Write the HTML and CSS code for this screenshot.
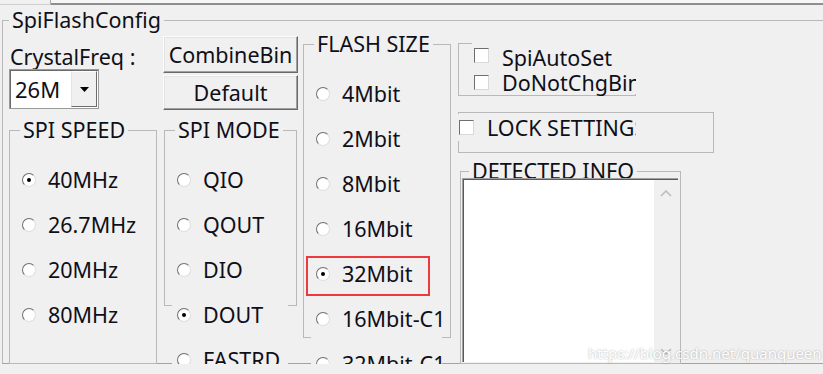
FILE: index.html
```html
<!DOCTYPE html>
<html lang="en">
  <head>
    <meta charset="UTF-8" />
    <title>SpiFlashConfig</title>
    <link rel="stylesheet" href="styles.css">
  </head>
  <body>
    <div class="topbar">
      <div class="tab"></div>
      <div class="tab-rest"></div>
    </div>

    <div class="group main">
      <div class="group-title">SpiFlashConfig</div>
      <div class="cols">
        <div class="col">
          <div class="label">CrystalFreq :</div>
          <div class="combo">
            <span class="combo-value">26M</span>
            <span class="combo-btn">
              <svg width="9" height="5" viewBox="0 0 9 5"><polygon points="0,0 9,0 4.5,5" fill="#000"/></svg>
            </span>
          </div>
          <div class="group speed">
            <div class="group-title">SPI SPEED</div>
            <div class="radio checked"><span class="dot"></span>40MHz</div>
            <div class="radio"><span class="dot"></span>26.7MHz</div>
            <div class="radio"><span class="dot"></span>20MHz</div>
            <div class="radio"><span class="dot"></span>80MHz</div>
          </div>
        </div>

        <div class="col">
          <button class="btn combine">CombineBin</button>
          <button class="btn default">Default</button>
          <div class="group mode">
            <div class="group-title">SPI MODE</div>
            <div class="radio"><span class="dot"></span>QIO</div>
            <div class="radio"><span class="dot"></span>QOUT</div>
            <div class="radio"><span class="dot"></span>DIO</div>
            <div class="radio checked"><span class="dot"></span>DOUT</div>
            <div class="radio"><span class="dot"></span>FASTRD</div>
          </div>
        </div>

        <div class="col">
          <div class="group flash">
            <div class="group-title">FLASH SIZE</div>
            <div class="radio"><span class="dot"></span>4Mbit</div>
            <div class="radio"><span class="dot"></span>2Mbit</div>
            <div class="radio"><span class="dot"></span>8Mbit</div>
            <div class="radio"><span class="dot"></span>16Mbit</div>
            <div class="radio checked"><span class="dot"></span>32Mbit</div>
            <div class="radio"><span class="dot"></span>16Mbit-C1</div>
            <div class="radio"><span class="dot"></span>32Mbit-C1</div>
          </div>
        </div>

        <div class="col">
          <div class="chk-group">
            <div class="check first"><span class="box"></span>SpiAutoSet</div>
            <div class="check second"><span class="box"></span>DoNotChgBin</div>
          </div>
          <div class="lock-group">
            <div class="check lock"><span class="box"></span>LOCK SETTINGS</div>
          </div>
          <div class="group info">
            <div class="group-title">DETECTED INFO</div>
            <div class="info-box">
              <div class="info-text"></div>
              <div class="scrollbar">
                <svg width="12" height="7" viewBox="0 0 12 7"><polyline points="1,6 6,1 11,6" fill="none" stroke="#bdbdbd" stroke-width="1.6"/></svg>
                <svg width="12" height="7" viewBox="0 0 12 7"><polyline points="1,1 6,6 11,1" fill="none" stroke="#bdbdbd" stroke-width="1.6"/></svg>
              </div>
            </div>
          </div>
        </div>
      </div>
    </div>

    <div class="statusbar"></div>

    <div class="highlight"></div>
    <div class="watermark">https://blog.csdn.net/quanqueen</div>
  </body>
</html>
```

FILE: styles.css
```css
* {
  box-sizing: border-box;
}
body {
  margin: 0;
  width: 823px;
  height: 374px;
  overflow: hidden;
  position: relative;
  background: #f0f0f0;
  font-family: "Noto Sans", sans-serif;
  font-size: 21.5px;
  color: #0f0f18;
}
.topbar {
  display: flex;
  height: 5px;
}
.tab {
  width: 51px;
  border-right: 1px solid #a8a8a8;
  border-bottom: 1px solid #cfcfcf;
}
.tab-rest {
  flex: 1;
  background: #f6f6f6;
  border-bottom: 2px solid #8e8e8e;
}

/* group boxes */
.group {
  border: 1px solid #b9b9b9;
}
.group-title {
  display: table;
  margin: -15px 0 13px 10px;
  padding: 0 3px;
  line-height: 28px;
  background: #f0f0f0;
  white-space: nowrap;
}
.main {
  margin: 15px 0 0 2px;
  height: 344px;
  border-right: none;
  border-bottom-color: #a3a3a3;
}
.main > .group-title {
  margin: -15px 0 0 6px;
}
.cols {
  display: grid;
  grid-template-columns: 148px 135px 148px 260px;
  column-gap: 6px;
  align-items: start;
  padding-left: 6px;
}
.col {
  display: flex;
  flex-direction: column;
}

/* crystal */
.label {
  margin-top: 9px;
  padding-left: 1px;
  line-height: 28px;
  white-space: nowrap;
}
.combo {
  position: relative;
  display: flex;
  margin-top: -2px;
  width: 90px;
  height: 40px;
  background: #fff;
  border: 1px solid #9a9a9a;
  box-shadow: inset 1px 1px #6a6a6a;
}
.combo-value {
  flex: 1;
  padding-left: 5px;
  font-size: 22px;
  line-height: 38px;
}
.combo-btn {
  display: flex;
  align-items: center;
  justify-content: center;
  width: 26px;
  margin: 1px 1px 1px 0;
  background: #f0f0f0;
  border: 1px solid;
  border-color: #fff #6d6d6d #6d6d6d #e3e3e3;
}
.speed {
  margin-top: 21px;
  height: 234px;
}

/* buttons */
.btn {
  font: inherit;
  color: inherit;
  width: 135px;
  margin: 2px 0 0;
  padding: 0;
  background: #f0f0f0;
  border: 1px solid;
  border-color: #fcfcfc #696969 #696969 #fcfcfc;
  box-shadow: inset -1px -1px #a0a0a0, inset 1px 1px #e3e3e3;
  line-height: 1;
}
.combine {
  height: 37px;
}
.default {
  height: 35px;
}
.mode {
  margin: 20px 0 0 1px;
  width: 133px;
  height: 176px;
}
.flash {
  margin: 10px 0 0 -1px;
  width: 148px;
  height: 294px;
}

/* radios */
.radio {
  display: flex;
  align-items: center;
  height: 45px;
  margin: 0 8px 0 7px;
  padding-left: 5px;
  background: #f0f0f0;
  white-space: nowrap;
}
.dot {
  flex: none;
  display: flex;
  align-items: center;
  justify-content: center;
  width: 14px;
  height: 14px;
  margin-right: 12px;
  border-radius: 50%;
  background: #fff;
  border: 1px solid;
  border-color: #6f6f6f #dedede #dedede #6f6f6f;
}
.checked .dot::after {
  content: "";
  width: 4px;
  height: 4px;
  border-radius: 50%;
  background: #000;
}

/* checkboxes */
.chk-group {
  margin-top: 9px;
  width: 178px;
  height: 53px;
  border: 1px solid #b9b9b9;
}
.check {
  display: flex;
  align-items: center;
  overflow-x: clip;
  white-space: nowrap;
  background: #f0f0f0;
}
.chk-group .check {
  width: 164px;
  margin-left: 13px;
  padding-left: 2px;
}
.first {
  margin-top: -1px;
  height: 28px;
}
.second {
  height: 23px;
}
.box {
  flex: none;
  width: 15px;
  height: 15px;
  margin-right: 13px;
  background: #fff;
  border: 1px solid;
  border-color: #6f6f6f #d9d9d9 #d9d9d9 #6f6f6f;
}
.first .box {
  margin-top: -3px;
}
.lock-group {
  margin-top: 16px;
  width: 256px;
  height: 41px;
  border: 1px solid #b9b9b9;
}
.lock {
  width: 178px;
  height: 27px;
  margin: 1px 0 0 -1px;
  padding-left: 1px;
}

/* detected info */
.info {
  margin: 18px 0 0 2px;
  width: 221px;
  height: 193px;
}
.info .group-title {
  margin: -15px 0 0 8px;
}
.info-box {
  position: relative;
  display: flex;
  width: 216px;
  height: 184px;
  margin: -7px 0 0 1px;
  background: #fff;
  border-top: 1px solid #a0a0a0;
  border-left: 1px solid #a0a0a0;
  box-shadow: inset 1px 1px #5a5a5a;
}
.info-text {
  flex: 1;
}
.scrollbar {
  display: flex;
  flex-direction: column;
  justify-content: space-between;
  align-items: center;
  width: 24px;
  margin-top: 1px;
  padding: 10px 0 7px;
  background: #f0f0f0;
}

.statusbar {
  position: relative;
  height: 10px;
  background: #f0f0f0;
}

/* overlays */
.highlight {
  position: absolute;
  left: 306px;
  top: 256px;
  width: 124px;
  height: 40px;
  border: 2px solid #ec3a3f;
}
.watermark {
  position: absolute;
  left: 588px;
  top: 343px;
  font-size: 15px;
  line-height: 20px;
  color: #fff;
  text-shadow: 0 0 2px rgba(0, 0, 0, 0.35);
}
```
